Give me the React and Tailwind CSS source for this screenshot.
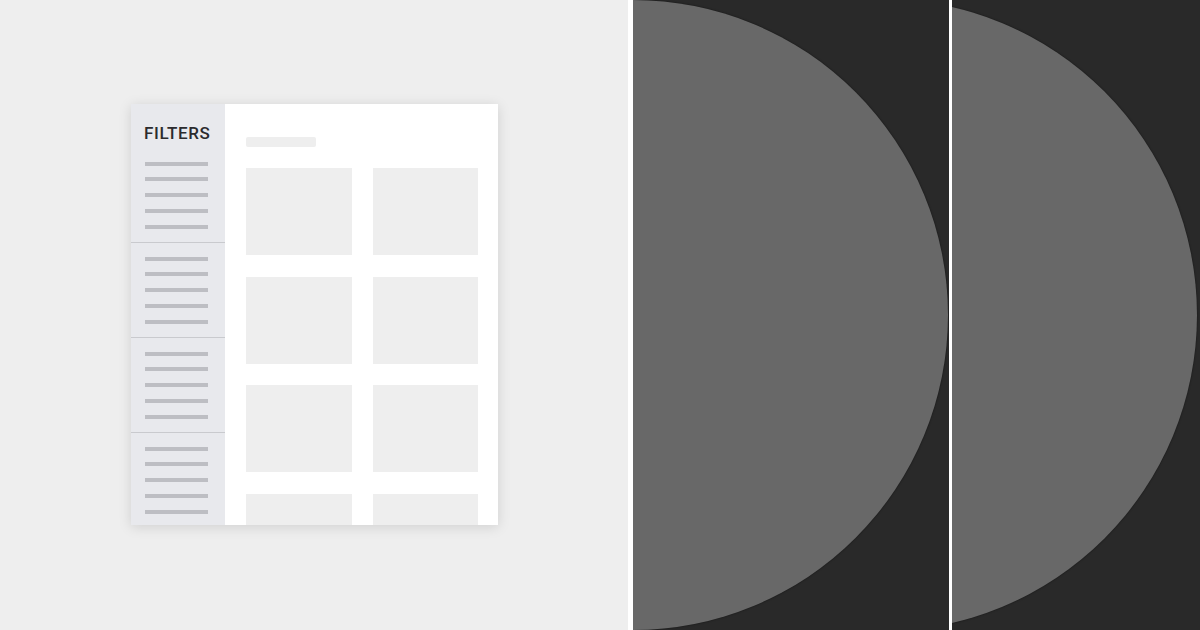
import React from 'react';

const groups = [0, 1, 2, 3];
const lines = [0, 1, 2, 3, 4];
const tiles = [0, 1, 2, 3, 4, 5, 6, 7];

function FilterLines() {
  return (
    <div className="flex flex-col gap-[11.75px] px-[14px] py-[13.5px]">
      {lines.map((l) => (
        <div key={l} className="h-[4px] w-[63px] bg-[#bdbec3]" />
      ))}
    </div>
  );
}

function Mockup() {
  return (
    <div className="flex h-[421px] w-[367px] overflow-hidden bg-white shadow-[0_2px_12px_rgba(0,0,0,0.13)]">
      {/* sidebar */}
      <div className="flex w-[94px] shrink-0 flex-col bg-[#e8e9ed]">
        <div className="px-[13px] pt-[19px] pb-[5px] text-[17px] leading-[20px] font-medium tracking-[0.6px] text-[#2b2b2e] [font-family:Roboto,'Liberation_Sans',Arial,sans-serif]">
          FILTERS
        </div>
        {groups.map((g) => (
          <div key={g} className={g > 0 ? 'border-t border-[#c9cace]' : ''}>
            <FilterLines />
          </div>
        ))}
      </div>
      {/* content */}
      <div className="flex-1 pl-[21px] pr-[20px] pt-[33px]">
        <div className="h-[10px] w-[70px] rounded-[2px] bg-[#eeeeee]" />
        <div className="mt-[21px] grid grid-cols-2 gap-x-[21px] gap-y-[21.7px]">
          {tiles.map((t) => (
            <div key={t} className="h-[87px] bg-[#eeeeee]" />
          ))}
        </div>
      </div>
    </div>
  );
}

export default function App() {
  return (
    <div className="flex h-[630px] w-[1200px] overflow-hidden bg-white">
      {/* left illustration */}
      <div className="flex w-[628px] shrink-0 items-start bg-[#eeeeee] pl-[131px] pt-[104px]">
        <Mockup />
      </div>

      {/* slide 1 */}
      <div className="relative ml-[5px] h-full w-[316px] shrink-0 overflow-hidden bg-[#292929]">
        <div className="absolute top-0 left-[-315px] h-[630px] w-[630px] rounded-full bg-[#686868] shadow-[0_0_2px_rgba(0,0,0,0.6)]" />
      </div>

      {/* slide 2 */}
      <div className="relative ml-[3px] h-full flex-1 overflow-hidden bg-[#292929]">
        <div className="absolute top-[-1px] left-[-387px] h-[632px] w-[632px] rounded-full bg-[#686868] shadow-[0_0_2px_rgba(0,0,0,0.6)]" />
      </div>
    </div>
  );
}
